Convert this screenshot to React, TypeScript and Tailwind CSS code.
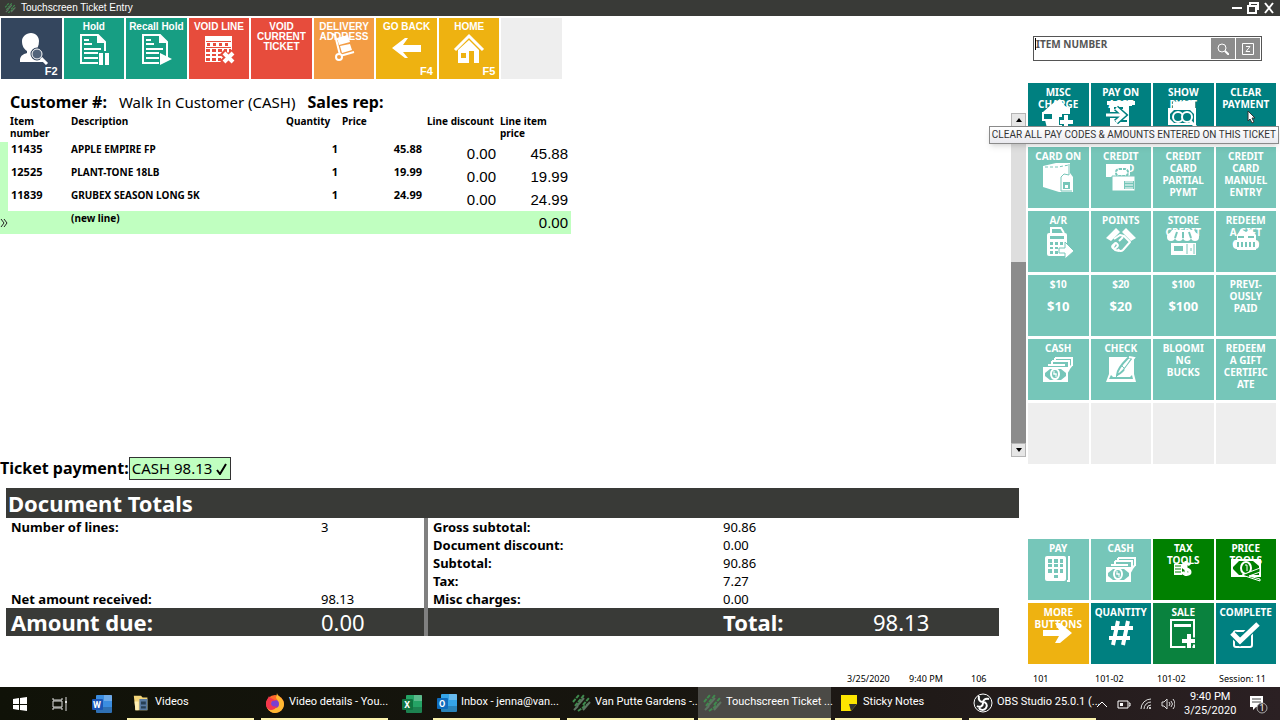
import React from 'react';
import clsx from 'clsx';

type Tone = 'navy' | 'green' | 'red' | 'orange' | 'yellow' | 'teal' | 'mint' | 'grass' | 'forest' | 'empty';

const toneClass: Record<Tone, string> = {
  navy: 'bg-[#34465e]',
  green: 'bg-[#179e83]',
  red: 'bg-[#e74c3c]',
  orange: 'bg-[#f39c44]',
  yellow: 'bg-[#eeb211]',
  teal: 'bg-[#008080]',
  mint: 'bg-[#76c6b9]',
  grass: 'bg-[#008000]',
  forest: 'bg-[#0a823e]',
  empty: 'bg-[#eeeeee]'
};

// Used for the parts of a glyph that show the tile through
const toneHex: Record<Tone, string> = {
  navy: '#34465e',
  green: '#179e83',
  red: '#e74c3c',
  orange: '#f39c44',
  yellow: '#eeb211',
  teal: '#008080',
  mint: '#76c6b9',
  grass: '#008000',
  forest: '#0a823e',
  empty: '#eeeeee'
};

interface TileData {
  label?: string;
  tone: Tone;
  icon?: string;
  hotkey?: string;
  amount?: string;
}

const toolbarTiles: TileData[] = [
  { tone: 'navy', icon: 'customer', hotkey: 'F2' },
  { label: 'Hold', tone: 'green', icon: 'hold' },
  { label: 'Recall Hold', tone: 'green', icon: 'recall' },
  { label: 'VOID LINE', tone: 'red', icon: 'voidLine' },
  { label: 'VOID\nCURRENT\nTICKET', tone: 'red' },
  { label: 'DELIVERY\nADDRESS', tone: 'orange', icon: 'dolly' },
  { label: 'GO BACK', tone: 'yellow', icon: 'back', hotkey: 'F4' },
  { label: 'HOME', tone: 'yellow', icon: 'home', hotkey: 'F5' },
  { tone: 'empty' }
];

const paymentTiles: TileData[] = [
  { label: 'MISC\nCHARGE', tone: 'teal', icon: 'misc' },
  { label: 'PAY ON\nACCT', tone: 'teal', icon: 'payOn' },
  { label: 'SHOW\nPYMT', tone: 'teal', icon: 'showPay' },
  { label: 'CLEAR\nPAYMENT', tone: 'teal' },
  { label: 'CARD ON', tone: 'mint', icon: 'cardFile' },
  { label: 'CREDIT\nCARD', tone: 'mint', icon: 'creditCard' },
  { label: 'CREDIT\nCARD\nPARTIAL\nPYMT', tone: 'mint' },
  { label: 'CREDIT\nCARD\nMANUEL\nENTRY', tone: 'mint' },
  { label: 'A/R', tone: 'mint', icon: 'receivable' },
  { label: 'POINTS', tone: 'mint', icon: 'handshake' },
  { label: 'STORE\nCREDIT', tone: 'mint', icon: 'store' },
  { label: 'REDEEM\nA GIFT\nCARD', tone: 'mint', icon: 'gift' },
  { label: '$10', tone: 'mint', amount: '$10' },
  { label: '$20', tone: 'mint', amount: '$20' },
  { label: '$100', tone: 'mint', amount: '$100' },
  { label: 'PREVI-\nOUSLY\nPAID', tone: 'mint' },
  { label: 'CASH', tone: 'mint', icon: 'cash' },
  { label: 'CHECK', tone: 'mint', icon: 'check' },
  { label: 'BLOOMI\nNG\nBUCKS', tone: 'mint' },
  { label: 'REDEEM\nA GIFT\nCERTIFIC\nATE', tone: 'mint' },
  { tone: 'empty' },
  { tone: 'empty' },
  { tone: 'empty' },
  { tone: 'empty' }
];

const actionTiles: TileData[] = [
  { label: 'PAY', tone: 'mint', icon: 'keypad' },
  { label: 'CASH', tone: 'mint', icon: 'cash' },
  { label: 'TAX\nTOOLS', tone: 'grass', icon: 'tax' },
  { label: 'PRICE\nTOOLS', tone: 'grass', icon: 'price' },
  { label: 'MORE\nBUTTONS', tone: 'yellow', icon: 'more' },
  { label: 'QUANTITY', tone: 'teal', icon: 'hash' },
  { label: 'SALE', tone: 'forest', icon: 'sale' },
  { label: 'COMPLETE', tone: 'teal', icon: 'complete' }
];

const lines = [
  { item: '11435', description: 'APPLE EMPIRE FP', quantity: '1', price: '45.88', discount: '0.00', total: '45.88' },
  { item: '12525', description: 'PLANT-TONE 18LB', quantity: '1', price: '19.99', discount: '0.00', total: '19.99' },
  { item: '11839', description: 'GRUBEX SEASON LONG 5K', quantity: '1', price: '24.99', discount: '0.00', total: '24.99' }
];

const totals = [
  ['Gross subtotal:', '90.86'],
  ['Document discount:', '0.00'],
  ['Subtotal:', '90.86'],
  ['Tax:', '7.27'],
  ['Misc charges:', '0.00']
];

const statusItems = ['3/25/2020', '9:40 PM', '106', '101', '101-02', '101-02', 'Session: 11'];

const DocumentLines = () => (
  <>
    <path d="M3 2h17l7 7v21H3z" fill="none" stroke="#fff" strokeWidth="2" />
    <path d="M19 1v9h8z" fill="#fff" />
    <path d="M6 7h5M6 11h8M6 16h17M6 20h14M6 25h14" stroke="#fff" strokeWidth="2" />
  </>
);

const Bill = ({ cut }: { cut: string }) => (
  <>
    <rect x="2" y="14" width="23" height="13" fill={cut} stroke="#fff" strokeWidth="2" />
    <path d="M3 15h5l-5 4zM24 15h-5l5 4zM3 26h5l-5-4zM24 26h-5l5-4z" fill="#fff" />
    <ellipse cx="13" cy="20" rx="4" ry="5" fill="none" stroke="#fff" strokeWidth="2" />
    <path d="M11 20h4M12 17v3h2v3" stroke="#fff" fill="none" />
  </>
);

const glyphs: Record<string, (cut: string) => React.ReactNode> = {
  customer: (cut) => (
    <>
      <path d="M16 0c5 0 8 4 8 8 0 5-2 8-4 10v2c4 1 7 3 8 6v3H5v-3c1-4 4-5 7-6v-2c-3-2-5-5-5-10 0-4 4-8 9-8z" fill="#fff" />
      <circle cx="22" cy="21" r="5" fill={cut} stroke={cut} strokeWidth="3" />
      <circle cx="22" cy="21" r="5" fill="#52647b" stroke="#fff" />
      <path d="M26 25l6 6" stroke="#fff" strokeWidth="3" />
    </>
  ),
  hold: (cut) => (
    <>
      <DocumentLines />
      <path d="M20 18h13v14H20z" fill={cut} />
      <path d="M21 20h4v12h-4zM27 20h4v12h-4z" fill="#fff" />
    </>
  ),
  recall: (cut) => (
    <>
      <DocumentLines />
      <path d="M19 17v15h13z" fill={cut} />
      <path d="M20 20v12l12-6z" fill="#fff" />
    </>
  ),
  voidLine: (cut) => (
    <>
      <path d="M2 3h27v26H2z" fill="#fff" />
      <path d="M3 8h25v1H3zM3 14h25v1H3z" fill={cut} />
      <path d="M3 16h4v3H3zM9 16h4v3H9zM15 16h4v3h-4zM21 16h3v3h-3zM26 16h2v3h-2zM3 21h4v2H3zM9 21h4v2H9zM15 21h3v2h-3zM3 25h4v3H3zM9 25h4v3H9zM15 25h3v3h-3zM4 10h3v3H4zM10 10h3v3h-3zM16 10h3v3h-3zM22 10h3v3h-3z" fill={cut} />
      <path d="M19 19l12 11M31 19L19 30" stroke={cut} strokeWidth="7" />
      <path d="M21 20l9 9M30 20l-9 9" stroke="#fff" strokeWidth="4" />
    </>
  ),
  dolly: (cut) => (
    <>
      <path d="M4 1l3 1 5 20" fill="none" stroke="#fff" strokeWidth="2" />
      <path d="M9 6l11-3 2 7-11 3zM12 14l10-2 2 6-10 3z" fill="#fff" transform="translate(0 -1)" />
      <path d="M12 23l14-4" stroke="#fff" strokeWidth="2" />
      <circle cx="11" cy="24" r="3" fill={cut} stroke="#fff" strokeWidth="2" />
    </>
  ),
  back: () => <path d="M1 15l13-10h3l-5 7h18v7H12l5 6h-3z" fill="#fff" />,
  home: (cut) => (
    <>
      <path d="M2 17L16 3l14 14" fill="none" stroke="#fff" strokeWidth="3" />
      <path d="M16 7l10 10v13h-5V18h-5v12H5V17z" fill="#fff" />
      <path d="M8 20h5v5H8z" fill={cut} />
    </>
  ),
  misc: (cut) => (
    <>
      <path d="M1 14l9-8 8-5 5 7 5 2v20H5z" fill="#fff" />
      <path d="M1 15h10v7H1z" fill={cut} stroke="#fff" strokeWidth="2" />
      <path d="M24 16v14M17 23h14" stroke={cut} strokeWidth="8" />
      <path d="M24 17v13M18 24h13" stroke="#fff" strokeWidth="4" />
    </>
  ),
  payOn: (cut) => (
    <>
      <path d="M2 3h28v4H2zM5 6h22v24H5z" fill="#fff" />
      <path d="M24 8h3v20h-3zM10 22h12v2H10zM9 9h9v2H9z" fill={cut} />
      <path d="M1 17h16M11 10l8 7-8 7" fill="none" stroke={cut} strokeWidth="6" />
      <path d="M1 17h16M11 10l8 7-8 7" fill="none" stroke="#fff" strokeWidth="3" />
    </>
  ),
  showPay: (cut) => (
    <>
      <path d="M6 4l22-2v10H6z" fill="#fff" />
      <rect x="2" y="11" width="26" height="15" fill={cut} stroke="#fff" strokeWidth="2" />
      <path d="M3 12h4l-4 4zM27 12h-4l4 4zM3 25h4l-4-4z" fill="#fff" />
      <circle cx="11" cy="19" r="5" fill="none" stroke="#fff" strokeWidth="2" />
      <circle cx="20" cy="19" r="5" fill={cut} stroke="#fff" strokeWidth="2" />
      <path d="M23 23l7 7" stroke="#fff" strokeWidth="3" />
    </>
  ),
  cardFile: (cut) => (
    <>
      <path d="M1 4l13-3h14v10l3 4v15H17L1 25z" fill="#fff" />
      <path d="M3 5h13l11-2" fill="none" stroke={cut} strokeDasharray="3 2" />
      <path d="M27 2v11l-5-1-3 3v14h11" fill="none" stroke={cut} />
      <path d="M21 20h7v7h-7z" fill={cut} />
      <path d="M23 23h3v3h-3z" fill="#fff" />
    </>
  ),
  creditCard: (cut) => (
    <>
      <path d="M1 2h24v13H1z" fill="#fff" />
      <rect x="11" y="7" width="12" height="7" rx="3" fill="none" stroke={cut} strokeWidth="2" strokeDasharray="3 1" />
      <path d="M7 14h23v15H7z" fill="#fff" stroke={cut} />
      <path d="M19 19h10v8H19z" fill={cut} />
      <path d="M20 20h8M20 23h8M20 26h8" stroke="#fff" />
    </>
  ),
  receivable: (cut) => (
    <>
      <path d="M9 7V2h10l3 5" fill={cut} stroke="#fff" strokeWidth="2" />
      <rect x="5" y="7" width="20" height="23" rx="2" fill="#fff" />
      <path d="M8 10h14v3H8zM8 16h3v3H8zM13 16h3v3h-3zM18 16h3v3h-3zM8 21h3v2H8zM13 21h3v2h-3zM8 25h3v3H8zM13 25h3v3h-3z" fill={cut} />
      <path d="M17 22h6v-6l9 9-9 8v-6h-6z" fill="#fff" stroke={cut} />
    </>
  ),
  handshake: () => (
    <>
      <path d="M1 12l10-10 4 4-9 9zM31 12L21 2l-4 4 9 9z" fill="#fff" />
      <path d="M9 13l6-4 4 1 6 6-7 8c-2 2-4 1-5-1M14 15l4-4M10 18l-2 3 2 3 4 1" fill="none" stroke="#fff" strokeWidth="2" strokeLinejoin="round" />
      <rect x="7" y="18" width="6" height="4" rx="2" fill="none" stroke="#fff" strokeWidth="2" transform="rotate(-45 10 20)" />
    </>
  ),
  store: (cut) => (
    <>
      <path d="M5 4h22l5 7H0z" fill="#fff" />
      <circle cx="4" cy="11" r="4" fill="#fff" />
      <circle cx="12" cy="11" r="4" fill="#fff" />
      <circle cx="20" cy="11" r="4" fill="#fff" />
      <circle cx="28" cy="11" r="4" fill="#fff" />
      <path d="M10 6l-2 6M22 6l2 6M16 6v6" stroke={cut} strokeWidth="2" />
      <path d="M4 17h25v12H4z" fill="#fff" />
      <path d="M7 20h9v5H7z" fill={cut} />
      <path d="M20 18v10M27 18v10" stroke={cut} />
      <path d="M24 22v3" stroke={cut} />
    </>
  ),
  gift: (cut) => (
    <>
      <path d="M7 9l4-6 5 3 5-3 5 6v15H7z" fill="#fff" />
      <rect x="3" y="15" width="26" height="8" rx="4" fill="#fff" />
      <path d="M8 11h6M18 11h6M8 16v5M12 16v5M16 16v5M20 16v5M24 16v5" stroke={cut} strokeWidth="2" />
    </>
  ),
  cash: (cut) => (
    <>
      <path d="M13 4h17v8M10 7h17v8M6 11h17" fill="none" stroke="#fff" strokeWidth="2" />
      <path d="M30 11l-4 5M27 15l-3 5M13 4v3M10 7v3" stroke="#fff" strokeWidth="2" />
      <Bill cut={cut} />
    </>
  ),
  check: (cut) => (
    <>
      <path d="M4 3h25v17l2 8H1l3-8z" fill="#fff" />
      <path d="M6 21l2 2h17l2-2 1 4H4z" fill={cut} />
      <path d="M12 21c0-5 5-11 11-17 2-1 4 0 3 2-4 6-8 13-14 15z" fill="#fff" stroke={cut} strokeWidth="2" />
      <path d="M17 12l4 4M10 24l5-5" stroke={cut} />
      <path d="M24 3l5 1-9 12" fill="none" stroke="#fff" strokeWidth="2" />
    </>
  ),
  keypad: (cut) => (
    <>
      <rect x="3" y="2" width="21" height="25" rx="2" fill="#fff" />
      <path d="M26 3h1v24h-2" fill="none" stroke="#fff" strokeWidth="2" />
      <path d="M6 5h4v4H6zM12 5h4v4h-4zM18 5h3v4h-3zM6 10h4v3H6zM12 10h4v3h-4zM18 10h3v3h-3zM6 15h4v4H6zM12 15h4v4h-4zM18 15h3v4h-3zM12 21h4v3h-4z" fill={cut} />
    </>
  ),
  tax: (cut) => (
    <>
      <path d="M7 10h8v11H7z" fill="#fff" />
      <path d="M8 12h6M8 15h6M8 18h6" stroke={cut} />
      <path d="M23 11c-2-2-7-2-7 1 0 4 7 2 7 6 0 3-6 3-8 0M19 7v15" fill="none" stroke="#fff" strokeWidth="3" />
    </>
  ),
  price: (cut) => (
    <>
      <rect x="2" y="6" width="28" height="16" fill={cut} stroke="#fff" strokeWidth="2" />
      <path d="M3 7h6l-6 6zM3 21h6l-6-6zM29 7h-6l6 5z" fill="#fff" />
      <ellipse cx="16" cy="14" rx="5" ry="6" fill="none" stroke="#fff" strokeWidth="2" />
      <path d="M15 11h2v6" fill="none" stroke="#fff" />
      <path d="M12 21l18-7v4l-11 4 11 3v2z" fill={cut} stroke="#fff" />
    </>
  ),
  more: () => <path d="M1 12h16l-4-7h5l12 10-12 10h-5l4-7H1z" fill="#fff" />,
  hash: () => <path d="M13 3L8 27M23 3l-5 24M6 10h22M4 20h21" stroke="#fff" strokeWidth="4" />,
  sale: (cut) => (
    <>
      <rect x="4" y="2" width="23" height="27" fill="none" stroke="#fff" strokeWidth="2" />
      <path d="M7 6h17v3H7z" fill="#fff" />
      <path d="M22 14v16M14 23h15" stroke={cut} strokeWidth="7" />
      <path d="M22 16v14M15 23h13" stroke="#fff" strokeWidth="4" />
    </>
  ),
  complete: (cut) => (
    <>
      <rect x="4" y="13" width="18" height="16" rx="2" fill="none" stroke="#fff" strokeWidth="2" />
      <path d="M3 16l7 7L28 5" fill="none" stroke={cut} strokeWidth="8" />
      <path d="M2 15l8 8L28 6" fill="none" stroke="#fff" strokeWidth="5" />
    </>
  )
};

/**
 * Tile - touch button with a caption, an optional glyph over it and a hotkey
 */
const Tile: React.FC<{ tile: TileData; compact?: boolean }> = ({ tile, compact }) => {
  const { label, tone, icon, hotkey, amount } = tile;

  if (tone === 'empty') {
    return <div className={clsx('h-[61px]', toneClass[tone])} />;
  }

  return (
    <button
      type="button"
      aria-label={label ? undefined : 'Find customer'}
      className={clsx('grid h-[61px] grid-cols-1 grid-rows-1 overflow-hidden font-bold text-white', toneClass[tone])}
    >
      {label && (
        <span
          className={clsx(
            'col-start-1 row-start-1 self-start whitespace-pre text-center text-[10px]',
            compact ? 'pt-1 font-["Liberation_Sans",sans-serif] leading-[10px]' : 'pt-[3px] leading-3'
          )}
        >
          {label}
        </span>
      )}
      {icon && (
        <svg
          viewBox="0 0 32 32"
          className="col-start-1 row-start-1 mt-[15px] h-8 w-8 self-start justify-self-center overflow-visible"
          aria-hidden="true"
        >
          {glyphs[icon](toneHex[tone])}
        </svg>
      )}
      {amount && <span className="col-start-1 row-start-1 self-center text-[13px] leading-4">{amount}</span>}
      {hotkey && (
        <span className="col-start-1 row-start-1 self-end justify-self-end pr-1 pb-[2px] font-['Liberation_Sans',sans-serif] text-[11px] leading-3">
          {hotkey}
        </span>
      )}
    </button>
  );
};

const AppLogo: React.FC<{ className: string }> = ({ className }) => (
  <svg viewBox="0 0 20 20" className={className} aria-hidden="true">
    <path d="M2 9l6-7M4 13l9-11M12 12l6-7M7 18l10-7" stroke="#3f8b4e" strokeWidth="2" strokeDasharray="4 1" />
    <path d="M6 13l7-8M12 17l7-8M3 17l4-4" stroke="#5d7361" strokeWidth="2" />
  </svg>
);

const TitleBar: React.FC = () => (
  <header className="flex h-4 items-center bg-[#393a37] px-1 text-white">
    <AppLogo className="h-3 w-3" />
    <h1 className="ml-[5px] flex-1 font-['Liberation_Sans',sans-serif] text-[10px] leading-4">Touchscreen Ticket Entry</h1>
    <div className="flex items-center gap-1 pr-px">
      <button type="button" aria-label="Minimize">
        <svg viewBox="0 0 12 12" className="h-3 w-3"><path d="M1 6h10" stroke="#fff" strokeWidth="2" /></svg>
      </button>
      <button type="button" aria-label="Restore">
        <svg viewBox="0 0 12 12" className="h-3 w-3">
          <path d="M3 3V1h8v6H9M1 4h8v7H1z" fill="none" stroke="#fff" strokeWidth="2" />
        </svg>
      </button>
      <button type="button" aria-label="Close">
        <svg viewBox="0 0 12 12" className="h-3 w-3"><path d="M2 1l8 10M10 1L2 11" stroke="#fff" strokeWidth="2" /></svg>
      </button>
    </div>
  </header>
);

const LineTable: React.FC = () => (
  <table className="mt-[2px] w-[571px] table-fixed border-collapse text-[11px] font-bold">
    <colgroup>
      <col className="w-2" />
      <col className="w-[63px]" />
      <col className="w-[214px]" />
      <col className="w-[53px]" />
      <col className="w-[89px]" />
      <col className="w-[71px]" />
      <col className="w-[73px]" />
    </colgroup>
    <thead>
      <tr className="h-[27px] text-left align-top text-[10px] leading-3">
        <th />
        <th className="pl-[2px]">Item<br />number</th>
        <th>Description</th>
        <th className="pl-px">Quantity</th>
        <th className="pl-1">Price</th>
        <th className="whitespace-nowrap">Line discount</th>
        <th className="pl-[2px]">Line item<br />price</th>
      </tr>
    </thead>
    <tbody>
      {lines.map((line) => (
        <tr key={line.item} className="h-[23px] align-top leading-[14px]">
          <td className="bg-[#c0ffc0]" />
          <td className="pl-[3px]">{line.item}</td>
          <td className="text-[10px]">{line.description}</td>
          <td className="text-right">{line.quantity}</td>
          <td className="pr-[5px] text-right">{line.price}</td>
          <td className="pr-[2px] text-right font-['Liberation_Sans',sans-serif] text-[15px] leading-[23px] font-normal">{line.discount}</td>
          <td className="pr-[3px] text-right font-['Liberation_Sans',sans-serif] text-[15px] leading-[23px] font-normal">{line.total}</td>
        </tr>
      ))}
      <tr className="h-[23px] bg-[#c0ffc0] align-top leading-[14px]">
        <td className="align-middle">
          <svg viewBox="0 0 8 10" className="h-[10px] w-2" aria-hidden="true">
            <path d="M1 1l3 4-3 4M4 1l3 4-3 4" fill="none" stroke="#222" />
          </svg>
        </td>
        <td />
        <td className="text-[10px]">(new line)</td>
        <td />
        <td />
        <td />
        <td className="pr-[3px] text-right font-['Liberation_Sans',sans-serif] text-[15px] leading-[23px] font-normal">0.00</td>
      </tr>
    </tbody>
  </table>
);

const ScrollBar: React.FC = () => (
  <div className="mr-[2px] flex w-[15px] flex-col bg-[#8c8c8c]">
    <button type="button" aria-label="Scroll up" className="flex h-[14px] items-center justify-center border border-[#b5b5b5] bg-[#e6e6e6]">
      <svg viewBox="0 0 6 4" className="h-1 w-[6px]"><path d="M0 4l3-4 3 4z" /></svg>
    </button>
    <div className="h-[135px] bg-[#dedede]" />
    <div className="flex-1" />
    <button type="button" aria-label="Scroll down" className="flex h-[14px] items-center justify-center border border-[#b5b5b5] bg-[#e6e6e6]">
      <svg viewBox="0 0 6 4" className="h-1 w-[6px]"><path d="M0 0l3 4 3-4z" /></svg>
    </button>
  </div>
);

const DocumentTotals: React.FC = () => (
  <section className="mt-2 pl-[6px] pr-[9px]">
    <h2 className="bg-[#393a37] pl-[2px] text-[22px] leading-[30px] font-bold text-white">Document Totals</h2>
    <div className="mr-5 flex text-[13px] leading-[18px]">
      <div className="flex w-[418px] flex-col">
        <dl className="grid flex-1 grid-cols-[310px_1fr] content-between pl-[5px]">
          <dt className="font-bold">Number of lines:</dt>
          <dd>3</dd>
          <dt className="font-bold">Net amount received:</dt>
          <dd>98.13</dd>
        </dl>
        <div className="grid grid-cols-[310px_1fr] bg-[#393a37] pl-[5px] text-[22px] leading-7 text-white">
          <span className="font-bold">Amount due:</span>
          <span>0.00</span>
        </div>
      </div>
      <div className="w-1 bg-[#808080]" />
      <div className="flex-1">
        <dl className="grid grid-cols-[290px_1fr] pl-[5px]">
          {totals.map(([name, value]) => (
            <React.Fragment key={name}>
              <dt className="font-bold">{name}</dt>
              <dd>{value}</dd>
            </React.Fragment>
          ))}
        </dl>
        <div className="flex bg-[#393a37] pl-[295px] text-[22px] leading-7 text-white">
          <span className="w-[150px] font-bold">Total:</span>
          <span>98.13</span>
        </div>
      </div>
    </div>
  </section>
);

const SearchBox: React.FC = () => (
  <form className="mt-5 mr-[18px] ml-[5px] flex h-[25px] border border-[#555] p-px" onSubmit={(e) => e.preventDefault()}>
    <input
      type="text"
      aria-label="Item number"
      placeholder="ITEM NUMBER"
      className="mb-[9px] min-w-0 flex-1 border-l border-black text-[10px] leading-[14px] font-bold outline-none placeholder:text-[#555]"
    />
    <div className="flex gap-px">
      <button type="submit" aria-label="Search" className="flex w-6 items-center justify-center bg-[#8c8c8c]">
        <svg viewBox="0 0 12 12" className="h-3 w-3">
          <circle cx="5" cy="5" r="4" fill="none" stroke="#fff" />
          <path d="M8 8l4 4" stroke="#fff" strokeWidth="2" />
        </svg>
      </button>
      <button type="button" aria-label="Zoom" className="flex w-6 items-center justify-center bg-[#8c8c8c]">
        <svg viewBox="0 0 12 12" className="h-3 w-3">
          <path d="M.5.5h11v11H.5zM4 3.500h4l-4 5h4" fill="none" stroke="#fff" />
        </svg>
      </button>
    </div>
  </form>
);

const TaskItem: React.FC<{ label: string; icon: React.ReactNode; active?: boolean; wide?: string }> = ({ label, icon, active, wide }) => (
  <button
    type="button"
    className={clsx(
      'flex h-full items-center gap-1 border-b-2 border-[#fbf3ae] pl-1',
      wide || 'w-[127px]',
      active && 'bg-[#4b4a46]'
    )}
  >
    <span className="flex w-5 shrink-0 justify-center">{icon}</span>
    <span className="whitespace-nowrap">{label}</span>
  </button>
);

const OfficeIcon: React.FC<{ letter: string; back: string; front: string }> = ({ letter, back, front }) => (
  <svg viewBox="0 0 20 20" className="h-5 w-5" aria-hidden="true">
    <rect x="4" y="1" width="16" height="18" rx="1" fill={back} />
    <path d="M12 1h8v6h-8z" fill="#fff" opacity=".25" />
    <path d="M4 13h16v6H4z" fill="#000" opacity=".2" />
    <rect x="0" y="5" width="11" height="11" rx="1" fill={front} />
    <text x="5" y="14" textAnchor="middle" fontSize="9" fontWeight="700" fill="#fff">{letter}</text>
  </svg>
);

const Taskbar: React.FC = () => (
  <footer className="flex h-[33px] items-center bg-linear-to-r from-[#101208] via-[#17150f] to-[#2b2023] font-['Roboto',sans-serif] text-[11px] text-white">
    <button type="button" aria-label="Start" className="ml-3">
      <svg viewBox="0 0 16 16" className="h-4 w-4">
        <path d="M1 3l6-1v6H1zM8 2l7-1v7H8zM1 9h6v5l-6-1zM8 9h7v6l-7-1z" fill="#fff" />
      </svg>
    </button>
    <button type="button" aria-label="Task view" className="ml-6">
      <svg viewBox="0 0 16 16" className="h-4 w-4">
        <path d="M1 2v2h9V2M1 5h9v6H1zM1 14v-2h9v2M14 1v14" fill="none" stroke="#ddd" />
        <circle cx="14" cy="6" r="1" fill="#fff" />
      </svg>
    </button>
    <button type="button" aria-label="Word" className="ml-6">
      <OfficeIcon letter="W" back="#3b8de0" front="#1a55b5" />
    </button>
    <nav aria-label="Running apps" className="ml-[15px] flex h-full gap-[7px]">
      <TaskItem
        label="Videos"
        icon={
          <svg viewBox="0 0 20 20" className="h-4 w-4">
            <path d="M1 1h9l2 2h6v16H3z" fill="#f3d57a" />
            <path d="M8 5h10v14H8z" fill="#597ba3" />
            <path d="M2 8h5v11H3z" fill="#fff0b5" />
            <path d="M10 8h6v4h-6zM10 14h6v3h-6z" fill="#263f55" />
          </svg>
        }
      />
      <TaskItem
        label="Video details - You..."
        icon={
          <svg viewBox="0 0 20 20" className="h-5 w-5">
            <circle cx="10" cy="11" r="9" fill="#ff6a2b" />
            <path d="M12 0c0 3 7 5 7 11 0 5-4 9-9 9-3 0-6-2-8-5 8 3 15-3 9-10z" fill="#ffb932" />
            <circle cx="10" cy="11" r="4" fill="#7b3fd0" />
            <path d="M1 12c0-5 2-6 3-9 1 3 4 2 7 5-4-1-6 1-5 3 1 3 4 3 6 2-2 5-10 6-11-1z" fill="#f4364c" />
          </svg>
        }
      />
      <button type="button" aria-label="Excel" className="mr-1 ml-[7px]">
        <OfficeIcon letter="X" back="#25a365" front="#107440" />
      </button>
      <TaskItem label="Inbox - jenna@van..." icon={<OfficeIcon letter="O" back="#35a5e8" front="#0f6cbd" />} />
      <TaskItem label="Van Putte Gardens -..." icon={<AppLogo className="h-5 w-5" />} />
      <TaskItem label="Touchscreen Ticket ..." icon={<AppLogo className="h-5 w-5" />} active wide="w-[133px] -ml-[3px] -mr-[3px]" />
      <TaskItem
        label="Sticky Notes"
        icon={
          <svg viewBox="0 0 16 16" className="h-4 w-4">
            <path d="M0 0h16v9l-6 7H0z" fill="#fde500" />
            <path d="M8 9h8l-6 7z" fill="#333" />
          </svg>
        }
      />
      <TaskItem
        label="OBS Studio 25.0.1 (..."
        icon={
          <svg viewBox="0 0 20 20" className="h-5 w-5">
            <circle cx="10" cy="10" r="9" fill="#222" stroke="#fff" />
            <path d="M6 3c-1 4 1 6 4 6s5 3 3 6c-2 3-6 2-7 0M16 6c-4-1-6 1-6 4s-3 5-6 3" fill="none" stroke="#fff" strokeWidth="2" />
          </svg>
        }
      />
    </nav>
    <div className="flex flex-1 items-center justify-end gap-[9px] pr-3">
      <svg viewBox="0 0 12 12" className="h-3 w-3"><path d="M1 9l5-5 5 5" fill="none" stroke="#fff" /></svg>
      <svg viewBox="0 0 14 12" className="h-3 w-[14px]">
        <path d="M1 3h10v7H1zM12 5h1v3h-1" fill="none" stroke="#fff" />
        <path d="M3 5h3v3H3z" fill="#fff" />
      </svg>
      <svg viewBox="0 0 12 12" className="h-3 w-3">
        <path d="M1 11A10 10 0 0111 1M4 11a7 7 0 017-7M7 11a4 4 0 014-4" fill="none" stroke="#ddd" />
        <circle cx="10" cy="10" r="1" fill="#fff" />
      </svg>
      <svg viewBox="0 0 14 12" className="h-3 w-[14px]">
        <path d="M1 4h2l3-3v10L3 8H1zM8 4q2 2 0 4M10 3q3 3 0 6M12 1q4 5 0 10" fill="none" stroke="#ddd" />
      </svg>
      <time className="text-center leading-[14px] whitespace-nowrap">9:40 PM<br />3/25/2020</time>
      <button type="button" aria-label="Notifications" className="ml-1">
        <svg viewBox="0 0 20 20" className="h-5 w-5">
          <path d="M1 2h13v11H7l-3 3v-3H1z" fill="#fff" />
          <path d="M3 5h9M3 8h9" stroke="#444" />
          <circle cx="13" cy="14" r="5" fill="#2b2023" stroke="#aaa" />
          <text x="13" y="17" textAnchor="middle" fontSize="9" fill="#fff">1</text>
        </svg>
      </button>
    </div>
  </footer>
);

const App: React.FC = () => {
  return (
    <div className="flex min-h-screen flex-col bg-white font-['Noto_Sans',sans-serif] text-black">
      <TitleBar />

      <main className="flex flex-1">
        <div className="flex min-w-0 flex-1 flex-col">
          <div className="mt-[2px] ml-px grid w-[561px] grid-cols-9 gap-[2px]">
            {toolbarTiles.map((tile, index) => (
              <Tile key={index} tile={tile} compact />
            ))}
          </div>

          <div className="mt-3 flex gap-3 pl-[10px] text-[15px] leading-[22px]">
            <span className="text-[16px] font-bold">Customer #:</span>
            <span>Walk In Customer (CASH)</span>
            <span className="text-[16px] font-bold">Sales rep:</span>
          </div>

          <div className="flex flex-1">
            <div className="flex-1">
              <LineTable />
            </div>
            <ScrollBar />
          </div>

          <div className="flex items-center text-[15px] leading-[21px]">
            <span className="text-[16px] font-bold">Ticket payment:</span>
            <span className="flex items-center gap-1 border border-[#333] bg-[#c0ffc0] px-[2px]">
              CASH 98.13
              <svg viewBox="0 0 12 12" className="h-3 w-3" aria-hidden="true">
                <path d="M1 7l3 4 6-10" fill="none" stroke="#000" strokeWidth="2" />
              </svg>
            </span>
          </div>

          <DocumentTotals />
          <div className="h-[31px]" />
        </div>

        <aside className="relative flex w-[252px] flex-col">
          <SearchBox />
          <div className="mt-[22px] grid w-[248px] grid-cols-4 gap-x-[2px] gap-y-[3px]">
            {paymentTiles.map((tile, index) => (
              <Tile key={index} tile={tile} />
            ))}
          </div>
          <div className="mt-auto mb-[3px] grid w-[248px] grid-cols-4 gap-x-[2px] gap-y-[3px]">
            {actionTiles.map((tile, index) => (
              <Tile key={index} tile={tile} />
            ))}
          </div>

          {/* Pointer and the hint of the tile below it */}
          <svg viewBox="0 0 10 14" className="absolute top-[94px] left-[219px] h-[14px] w-[10px]" aria-hidden="true">
            <path d="M1 1v10l2-2 2 4 2-1-2-4h3z" fill="#fff" stroke="#333" />
          </svg>
          <div
            role="tooltip"
            className="absolute top-[110px] right-px border border-[#8a8a8a] bg-linear-to-b from-white to-[#e9e9ee] px-[2px] font-['Roboto',sans-serif] text-[10px] leading-4 whitespace-nowrap text-[#333] shadow-md"
          >
            CLEAR ALL PAY CODES &amp; AMOUNTS ENTERED ON THIS TICKET
          </div>
        </aside>
      </main>

      <div className="flex h-5 justify-end text-[9px] leading-6">
        <div className="grid w-[433px] grid-cols-[repeat(6,62px)_1fr] whitespace-nowrap">
          {statusItems.map((item, index) => (
            <span key={index}>{item}</span>
          ))}
        </div>
      </div>

      <Taskbar />
    </div>
  );
};

export default App;
